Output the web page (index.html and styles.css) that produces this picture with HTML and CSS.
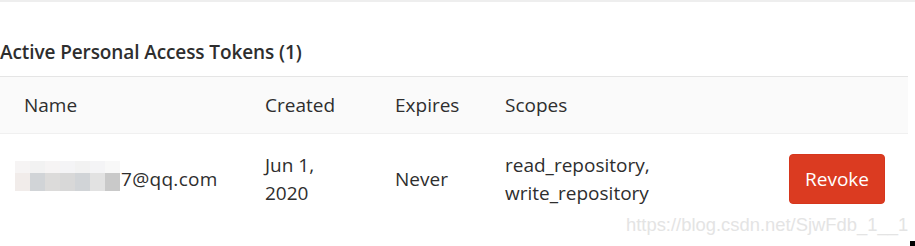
FILE: index.html
```html
<!DOCTYPE html>
<html>
  <head>
    <title>Personal Access Tokens</title>
    <link rel="stylesheet" href="styles.css">
  </head>
  <body>
    <div class="top-band"></div>
    <div class="tokens">
      <h5 class="tokens-title">Active Personal Access Tokens (1)</h5>
      <table class="tokens-table">
        <thead>
          <tr>
            <th class="col-name">Name</th>
            <th class="col-created">Created</th>
            <th class="col-expires">Expires</th>
            <th class="col-scopes">Scopes</th>
            <th class="col-action"></th>
          </tr>
        </thead>
        <tbody>
          <tr>
            <td class="col-name">
              <div class="name-cell">
                <span class="mosaic">
                  <span class="mosaic-row">
                    <span class="m m-a"></span><span class="m m-b"></span><span class="m m-a"></span><span class="m m-c"></span><span class="m m-b"></span><span class="m m-c"></span><span class="m m-d"></span>
                  </span>
                  <span class="mosaic-row tall">
                    <span class="m m-e"></span><span class="m m-f"></span><span class="m m-g"></span><span class="m m-h"></span><span class="m m-f"></span><span class="m m-i"></span><span class="m m-j"></span>
                  </span>
                </span>
                <span class="email">7@qq.com</span>
              </div>
            </td>
            <td class="col-created">Jun 1,<br>2020</td>
            <td class="col-expires">Never</td>
            <td class="col-scopes">read_repository,<br>write_repository</td>
            <td class="col-action"><button class="btn-revoke">Revoke</button></td>
          </tr>
        </tbody>
      </table>
    </div>
    <div class="watermark">https://blog.csdn.net/SjwFdb_1__1</div>
    <div class="corner-dot"></div>
  </body>
</html>
```

FILE: styles.css
```css
body {
  margin: 0;
  width: 915px;
  height: 246px;
  overflow: hidden;
  background-color: #ffffff;
  font-family: "Open Sans", "Noto Sans", sans-serif;
  color: #2e2e2e;
  position: relative;
}

.top-band {
  height: 2px;
  background-color: #eeeeee;
}

.tokens {
  width: 908px;
}

.tokens-title {
  margin: 0;
  padding-top: 36px;
  height: 38px;
  font-size: 19px;
  font-weight: 600;
  line-height: 28px;
  letter-spacing: -0.1px;
}

.tokens-table {
  width: 908px;
  border-collapse: collapse;
  table-layout: fixed;
  font-size: 19px;
  line-height: 28px;
}

.tokens-table th {
  background-color: #fafafa;
  border-top: 1px solid #e5e5e5;
  border-bottom: 1px solid #f0f0f0;
  font-weight: 400;
  text-align: left;
  padding: 14px 0 14px 24px;
  height: 28px;
}

.tokens-table td {
  vertical-align: middle;
  text-align: left;
  padding: 17px 0 17px 24px;
}

.col-name {
  width: 217px;
}

.col-created {
  width: 106px;
}

.col-expires {
  width: 86px;
}

.col-scopes {
  width: 260px;
}

.tokens-table .col-action {
  padding-left: 0;
  padding-right: 23px;
  text-align: right;
}

.tokens-table td.col-name {
  padding-left: 15px;
  white-space: nowrap;
}

.name-cell {
  display: flex;
  align-items: center;
}

.mosaic {
  display: flex;
  flex-direction: column;
  margin-top: -6px;
}

.mosaic-row {
  display: flex;
}

.m {
  width: 15px;
  height: 12px;
}

.tall .m {
  height: 18px;
}

.m-a { background-color: #f6f4f4; }
.m-b { background-color: #f2f2f2; }
.m-c { background-color: #f4f4f6; }
.m-d { background-color: #f8f8f8; }
.m-e { background-color: #f1ecea; }
.m-f { background-color: #d1d4d7; }
.m-g { background-color: #dcdbda; }
.m-h { background-color: #d8d8d8; }
.m-i { background-color: #e2e2e2; }
.m-j { background-color: #c9c9c9; }

.email {
  margin-left: 1px;
  letter-spacing: 0.3px;
}

.btn-revoke {
  background-color: #db3b21;
  color: #ffffff;
  border: 1px solid #d6361d;
  border-radius: 4px;
  width: 96px;
  height: 50px;
  font-family: "Open Sans", "Noto Sans", sans-serif;
  font-size: 19px;
  padding: 0;
  cursor: pointer;
}

.watermark {
  position: absolute;
  left: 626px;
  top: 215px;
  font-family: "Liberation Sans", Arial, sans-serif;
  font-size: 18.4px;
  line-height: 20px;
  color: #e4e4e4;
  white-space: nowrap;
}

.corner-dot {
  position: absolute;
  left: 910px;
  top: 241px;
  width: 5px;
  height: 5px;
  background-color: #000000;
}
```
